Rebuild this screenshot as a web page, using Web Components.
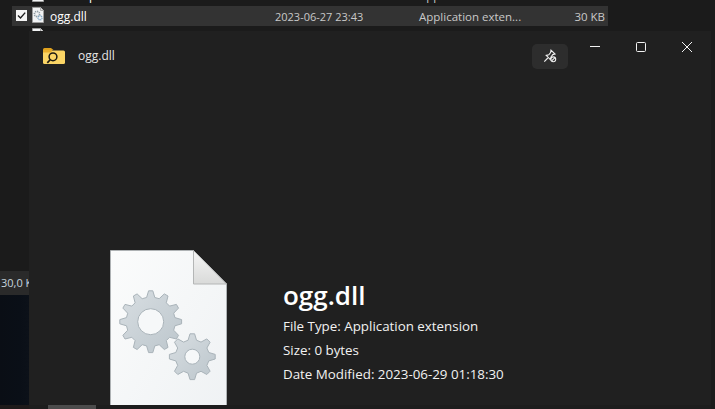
<!DOCTYPE html>
<html>
<head>
<meta charset="utf-8">
<title>ogg.dll</title>
<style>
  html, body { margin: 0; height: 100%; overflow: hidden; }
  body { background: #1b1b1b; font-family: 'Open Sans', 'Noto Sans', sans-serif; }
</style>
</head>
<body>
<explorer-list>
  <file-row name="libmodp" type="Application exten..." stub></file-row>
  <file-row name="ogg.dll" date="2023-06-27 23:43" type="Application exten..." size="30 KB" selected></file-row>
  <file-row stub></file-row>
</explorer-list>
<side-strip></side-strip>
<preview-window name="ogg.dll" type="Application extension" size="0 bytes" modified="2023-06-29 01:18:30"></preview-window>

<script>
// Builds a cog outline as a path string, centred on cx/cy.
function cogPath(cx, cy, teeth, outer, root) {
  const pts = [];
  const step = Math.PI * 2 / teeth;
  for (let i = 0; i < teeth; i++) {
    const a = i * step - Math.PI / 2;
    [[-0.32, root], [-0.13, outer], [0.13, outer], [0.32, root]].forEach(([t, r]) => {
      pts.push((cx + Math.cos(a + t * step) * r).toFixed(1) + ' ' + (cy + Math.sin(a + t * step) * r).toFixed(1));
    });
  }
  return 'M' + pts.join('L') + 'Z';
}

class ExplorerList extends HTMLElement {
  connectedCallback() {
    this.attachShadow({ mode: 'open' }).innerHTML = `
      <style>
        :host { display: flex; flex-direction: column; gap: 1px; margin: -15px 0 0 12px; width: 596px; }
      </style>
      <slot></slot>`;
  }
}

class FileRow extends HTMLElement {
  connectedCallback() {
    const a = n => this.getAttribute(n) || '';
    const selected = this.hasAttribute('selected');
    this.attachShadow({ mode: 'open' }).innerHTML = `
      <style>
        :host { display: grid; grid-template-columns: 4px 11px 5px 12px 6px 225px 144px 1fr 3px;
                align-items: center; height: 20px; font-size: 11.5px; color: #c9c9c9; }
        :host([selected]) { background: #333; }
        .check { grid-column: 2; grid-row: 1; width: 11px; height: 11px; background: #f4f4f4; display: block; margin-top: -1px; }
        .icon { grid-column: 4; grid-row: 1; width: 12px; height: 16px; display: block; margin-top: -2px; }
        .name { grid-column: 6; grid-row: 1; color: #fff; font-size: 12px; }
        .date { grid-column: 7; grid-row: 1; font-size: 11px; }
        .type { grid-column: 8; grid-row: 1; }
        .size { grid-column: 8; grid-row: 1; text-align: right; }
      </style>
      ${selected ? `<svg class="check" viewBox="0 0 11 11"><path d="M2 5.500 4.500 8 9.200 2.600" fill="none" stroke="#1c1c1c" stroke-width="1.400"/></svg>` : ''}
      <svg class="icon" viewBox="0 0 12 16">
        <path d="M.5.5H8.500L11.500 3.500V15.500H.5Z" fill="#f2f3f4" stroke="#9d9d9d"/>
        <path d="M8.500.5V3.500H11.500" fill="#ddd" stroke="#aaa"/>
        <circle cx="5" cy="7" r="2.600" fill="none" stroke="#8f9aa0" stroke-width="1.700" stroke-dasharray="1.200 .8"/>
        <circle cx="8" cy="10.800" r="2" fill="none" stroke="#7fa6c4" stroke-width="1.400" stroke-dasharray="1 .6"/>
      </svg>
      <span class="name">${a('name')}</span>
      <span class="date">${a('date')}</span>
      <span class="type">${a('type')}</span>
      ${a('size') ? `<span class="size">${a('size')}</span>` : ''}`;
  }
}

// Bit of the window behind the preview that still shows on the far left.
class SideStrip extends HTMLElement {
  connectedCallback() {
    this.attachShadow({ mode: 'open' }).innerHTML = `
      <style>
        :host { position: absolute; left: 0; top: 271px; width: 29px; height: 138px;
                display: flex; flex-direction: column; overflow: hidden; }
        .status { height: 24px; background: #2a2a2a; color: #c6d4de; font-size: 11px;
                  line-height: 24px; padding-left: 1px; white-space: nowrap; }
        .video { flex: 1; background: linear-gradient(90deg, #0a0e15, #0a0f17 70%, #0c1119); }
        .foot { height: 4px; background: #1e1a1a; }
      </style>
      <div class="status">30,0 KB</div>
      <div class="video"></div>
      <div class="foot"></div>`;
  }
}

class PreviewWindow extends HTMLElement {
  connectedCallback() {
    const a = n => this.getAttribute(n) || '';
    this.attachShadow({ mode: 'open' }).innerHTML = `
      <style>
        :host { position: absolute; left: 29px; top: 31px; width: 682px; height: 378px;
                display: flex; flex-direction: column; background: #202020; color: #fff;
                font-family: 'Open Sans', 'Noto Sans', sans-serif; }
        .bar { display: flex; align-items: center; height: 50px; flex: none; }
        .folder { width: 24px; height: 18px; margin: 0 0 0 14px; display: block; }
        .title { font-size: 12px; color: #e4e4e4; margin: -2px 0 0 11px; flex: 1; }
        .pin { width: 36px; height: 25px; background: #2d2d2d; border-radius: 5px; display: flex;
               align-items: center; justify-content: center; }
        .ctl { display: flex; width: 143px; height: 50px; flex: none; padding-left: 4px; box-sizing: border-box; }
        .ctl svg { width: 46px; height: 24px; display: block; margin-top: 4px; flex: none; }
        .body { flex: 1; display: flex; overflow: hidden; min-height: 0; padding: 169px 0 0 81px; gap: 56px; }
        .doc { width: 117px; height: 188px; flex: none; display: block; }
        .meta { padding-top: 29px; }
        h1 { margin: 0 0 3px; font-size: 26px; line-height: 32px; font-weight: 600; height: 32px; }
        p { margin: 0; font-size: 13.35px; line-height: 24px; color: #f2f2f2; white-space: nowrap; }
        .scroll { height: 4px; flex: none; background: #1d1d1d; padding-left: 19px; }
        .scroll div { width: 48px; height: 4px; background: #4c4c4c; }
      </style>
      <div class="bar">
        <svg class="folder" viewBox="0 0 24 18">
          <path d="M0 2.500A1.500 1.500 0 0 1 1.500 1H8L10.500 3H0Z" fill="#e0a21e"/>
          <path d="M0 3.500H20.500A1.500 1.500 0 0 1 22 5V15.500A1.500 1.500 0 0 1 20.500 17H1.500A1.500 1.500 0 0 1 0 15.500Z" fill="#fbd565"/>
          <path d="M0 3H9.500L8 5.500H0Z" fill="#e9ae2c"/>
          <circle cx="10" cy="9.800" r="3.900" fill="none" stroke="#1d1a12" stroke-width="1.500"/>
          <path d="M7.200 12.700 4.300 15.900" stroke="#1d1a12" stroke-width="1.700"/>
        </svg>
        <span class="title">${a('name')}</span>
        <div class="pin">
          <svg width="14" height="14" viewBox="0 0 14 14" fill="none" stroke="#f0f0f0" stroke-width="1.100">
            <path d="M8 1.200 12 5 9.800 5.600 8 8 7.400 10.600 3.200 6.400 5.800 5.800 7.600 3.600Z"/>
            <path d="M4.800 9 1.300 12.700"/>
            <circle cx="10.300" cy="10.300" r="2.400" fill="#2d2d2d"/>
            <path d="M8.700 11.900 12 8.700"/>
          </svg>
        </div>
        <div class="ctl">
          <svg viewBox="0 0 46 24" fill="none" stroke="#f2f2f2"><path d="M18 11.500H28"/></svg>
          <svg viewBox="0 0 46 24" fill="none" stroke="#f2f2f2"><rect x="18.500" y="7.500" width="9" height="9" rx="1"/></svg>
          <svg viewBox="0 0 46 24" fill="none" stroke="#f2f2f2"><path d="M18 7 28 17M28 7 18 17"/></svg>
        </div>
      </div>
      <div class="body">
        <svg class="doc" viewBox="0 0 117 188">
          <defs>
            <linearGradient id="sheet" x1="0" y1="0" x2="1" y2="1">
              <stop offset="0" stop-color="#fbfcfc"/><stop offset="1" stop-color="#eef1f3"/>
            </linearGradient>
            <linearGradient id="fold" x1="0" y1="0" x2="0" y2="1">
              <stop offset="0" stop-color="#f6f6f6"/><stop offset="1" stop-color="#d9dad9"/>
            </linearGradient>
            <linearGradient id="cog" x1="0" y1="0" x2="1" y2="1">
              <stop offset="0" stop-color="#d8dee2"/><stop offset="1" stop-color="#bcc6cc"/>
            </linearGradient>
          </defs>
          <path d="M.5.500H83.500L116.500 34V187.500H.5Z" fill="url(#sheet)" stroke="#aeb2b4"/>
          <path d="M83.500.5V34H116.500Z" fill="url(#fold)" stroke="#b4b6b6"/>
          <path id="big" fill="url(#cog)" stroke="#a9b3b9"/>
          <circle cx="40.700" cy="71.700" r="13" fill="#f6f8f9" stroke="#a9b3b9"/>
          <path id="small" fill="url(#cog)" stroke="#a9b3b9"/>
          <circle cx="82.300" cy="106.700" r="7.500" fill="#f6f8f9" stroke="#a9b3b9"/>
        </svg>
        <div class="meta">
          <h1>${a('name')}</h1>
          <p>File Type: ${a('type')}</p>
          <p>Size: ${a('size')}</p>
          <p>Date Modified: ${a('modified')}</p>
        </div>
      </div>
      <div class="scroll"><div></div></div>`;
    this.shadowRoot.getElementById('big').setAttribute('d', cogPath(40.7, 71.7, 12, 31, 24.5));
    this.shadowRoot.getElementById('small').setAttribute('d', cogPath(82.3, 106.7, 8, 23, 17));
  }
}

customElements.define('explorer-list', ExplorerList);
customElements.define('file-row', FileRow);
customElements.define('side-strip', SideStrip);
customElements.define('preview-window', PreviewWindow);
</script>
</body>
</html>
